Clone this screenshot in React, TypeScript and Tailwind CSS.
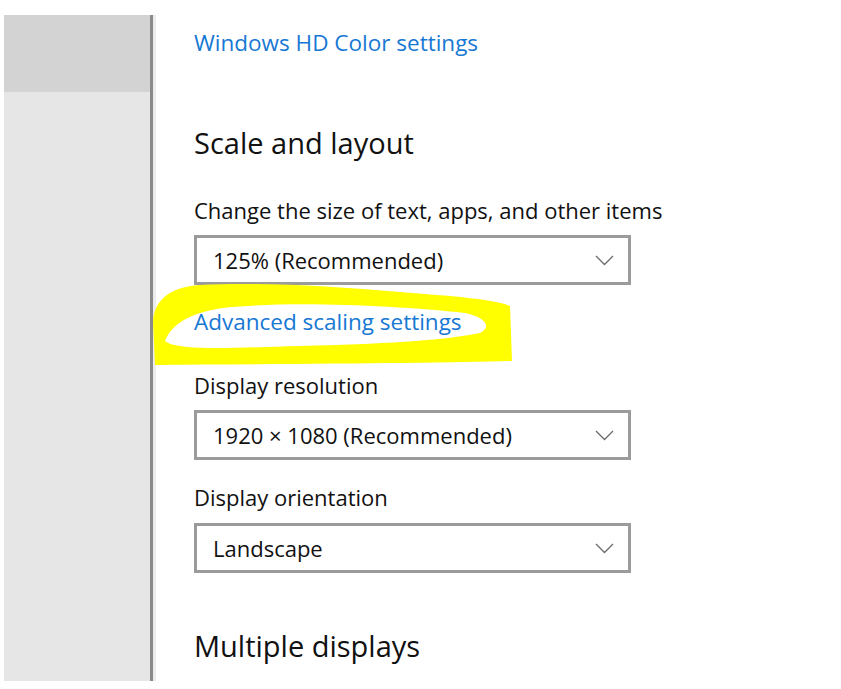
import React from "react";

function Chevron() {
    return (
        <svg width="19" height="11" viewBox="0 0 19 11" fill="none" stroke="#6b6b6b" strokeWidth={1.3}>
            <path d="M1 1l8.5 8.5L18 1" />
        </svg>
    );
}

function Dropdown({ value }: { value: string }) {
    return (
        <div className="w-[437px] h-[50px] border-[3px] border-[#9b9b9b] bg-white flex items-center justify-between pl-[16px] pr-[14px]">
            <span className="text-[22px] text-[#111]">{value}</span>
            <Chevron />
        </div>
    );
}

function Highlight() {
    return (
        <svg
            className="absolute left-0 top-0 pointer-events-none"
            width="841"
            height="689"
            viewBox="0 0 841 689"
        >
            <path
                fillRule="evenodd"
                fill="#ffff00"
                d="M153,322 C154,300 170,287 200,285 C260,282 330,286 400,292 C450,296 495,299 510,306 L512,361 C450,363 300,364 155,365 Z
                   M165,341 C172,323 192,311 232,307 C300,301 400,306 465,313 C482,316 494,326 480,333 C440,341 380,344 300,346 C230,348 177,351 165,341 Z"
            />
        </svg>
    );
}

export default function App() {
    return (
        <div
            className="relative w-[841px] h-[689px] bg-white flex overflow-hidden"
            style={{ fontFamily: '"Open Sans", "Noto Sans", sans-serif' }}
        >
            {/* sidebar */}
            <div className="ml-[4px] mt-[15px] w-[146px] h-[666px] flex flex-col">
                <div className="h-[77px] bg-[#d3d3d3]" />
                <div className="flex-1 bg-[#e6e6e6]" />
            </div>
            <div className="mt-[15px] w-[3px] h-[666px] bg-[#8a8a8a]" />
            <div className="mt-[15px] w-[3px] h-[666px] bg-[#ececec]" />

            {/* settings pane */}
            <div className="pl-[38px] flex flex-col">
                <a className="mt-[29px] text-[22.5px] leading-[28px] text-[#1778d4]">Windows HD Color settings</a>

                <h2 className="mt-[66px] text-[29px] leading-[40px] text-[#111]">Scale and layout</h2>

                <div className="mt-[33px] text-[22px] leading-[28px] text-[#111]">
                    Change the size of text, apps, and other items
                </div>
                <div className="mt-[11px]">
                    <Dropdown value="125% (Recommended)" />
                </div>

                <a className="mt-[23px] text-[22.5px] leading-[28px] text-[#1778d4]">Advanced scaling settings</a>

                <div className="mt-[35px] text-[22px] leading-[28px] text-[#111]">Display resolution</div>
                <div className="mt-[11px]">
                    <Dropdown value="1920 × 1080 (Recommended)" />
                </div>

                <div className="mt-[23px] text-[22px] leading-[28px] text-[#111]">Display orientation</div>
                <div className="mt-[12px]">
                    <Dropdown value="Landscape" />
                </div>

                <h2 className="mt-[53px] text-[29px] leading-[40px] text-[#111]">Multiple displays</h2>
            </div>

            <Highlight />
        </div>
    );
}
